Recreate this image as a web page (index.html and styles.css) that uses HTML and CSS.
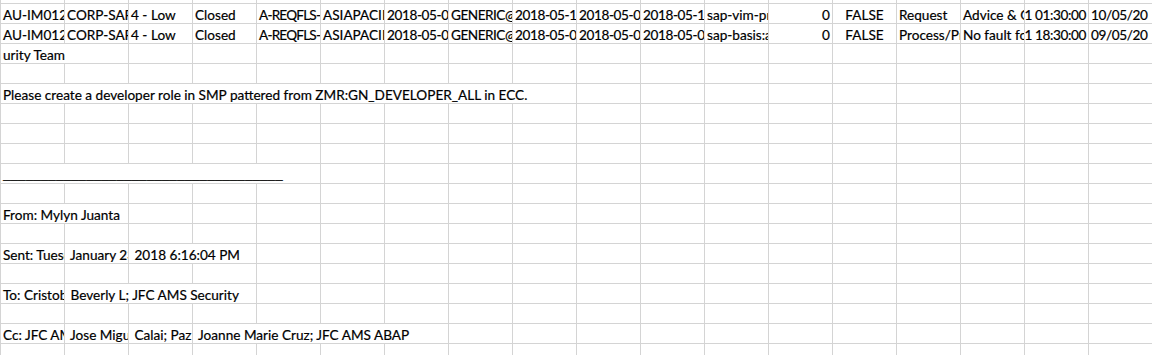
FILE: index.html
```html
<!DOCTYPE html>
<html lang="en">
<head>
<meta charset="utf-8">
<title>Sheet</title>
<link rel="stylesheet" href="styles.css">
</head>
<body>
<div class="sheet">
  <div class="row">
    <div class="c"></div><div class="c"></div><div class="c"></div><div class="c"></div><div class="c"></div><div class="c"></div><div class="c"></div><div class="c"></div><div class="c"></div><div class="c"></div><div class="c"></div><div class="c"></div><div class="c"></div><div class="c"></div><div class="c"></div><div class="c"></div><div class="c"></div><div class="c"></div>
  </div>
  <div class="row">
    <div class="c">AU-IM0121394</div><div class="c">CORP-SAP-VIM</div><div class="c">4 - Low</div><div class="c">Closed</div><div class="c tt">A-REQFLS-SAP</div><div class="c">ASIAPACIFIC</div><div class="c n">2018-05-04 09:12:33</div><div class="c t">GENERIC@jfc.com</div><div class="c n">2018-05-10 11:02:00</div><div class="c n">2018-05-07 10:00:00</div><div class="c n">2018-05-10 11:02:00</div><div class="c">sap-vim-pmo</div><div class="c r">0</div><div class="c m">FALSE</div><div class="c">Request</div><div class="c">Advice &amp; Guidance</div><div class="c r n"><span>2018-05-11 01:30:00</span></div><div class="c n">10/05/20</div>
  </div>
  <div class="row">
    <div class="c">AU-IM0121407</div><div class="c">CORP-SAP-BASIS</div><div class="c">4 - Low</div><div class="c">Closed</div><div class="c tt">A-REQFLS-SAP</div><div class="c">ASIAPACIFIC</div><div class="c n">2018-05-04 09:40:12</div><div class="c t">GENERIC@jfc.com</div><div class="c n">2018-05-09 17:21:00</div><div class="c n">2018-05-06 09:00:00</div><div class="c n">2018-05-09 17:21:00</div><div class="c">sap-basis:ams</div><div class="c r">0</div><div class="c m">FALSE</div><div class="c">Process/Procedure</div><div class="c">No fault found</div><div class="c r n"><span>2018-05-11 18:30:00</span></div><div class="c n">09/05/20</div>
  </div>
  <div class="row">
    <div class="c s2">urity Team</div><div class="c"></div><div class="c"></div><div class="c"></div><div class="c"></div><div class="c"></div><div class="c"></div><div class="c"></div><div class="c"></div><div class="c"></div><div class="c"></div><div class="c"></div><div class="c"></div><div class="c"></div><div class="c"></div><div class="c"></div><div class="c"></div>
  </div>
  <div class="row">
    <div class="c"></div><div class="c"></div><div class="c"></div><div class="c"></div><div class="c"></div><div class="c"></div><div class="c"></div><div class="c"></div><div class="c"></div><div class="c"></div><div class="c"></div><div class="c"></div><div class="c"></div><div class="c"></div><div class="c"></div><div class="c"></div><div class="c"></div><div class="c"></div>
  </div>
  <div class="row">
    <div class="c s9">Please create a developer role in SMP pattered from ZMR:GN_DEVELOPER_ALL in ECC.</div><div class="c"></div><div class="c"></div><div class="c"></div><div class="c"></div><div class="c"></div><div class="c"></div><div class="c"></div><div class="c"></div><div class="c"></div>
  </div>
  <div class="row">
    <div class="c"></div><div class="c"></div><div class="c"></div><div class="c"></div><div class="c"></div><div class="c"></div><div class="c"></div><div class="c"></div><div class="c"></div><div class="c"></div><div class="c"></div><div class="c"></div><div class="c"></div><div class="c"></div><div class="c"></div><div class="c"></div><div class="c"></div><div class="c"></div>
  </div>
  <div class="row">
    <div class="c"></div><div class="c"></div><div class="c"></div><div class="c"></div><div class="c"></div><div class="c"></div><div class="c"></div><div class="c"></div><div class="c"></div><div class="c"></div><div class="c"></div><div class="c"></div><div class="c"></div><div class="c"></div><div class="c"></div><div class="c"></div><div class="c"></div><div class="c"></div>
  </div>
  <div class="row">
    <div class="c"></div><div class="c"></div><div class="c"></div><div class="c"></div><div class="c"></div><div class="c"></div><div class="c"></div><div class="c"></div><div class="c"></div><div class="c"></div><div class="c"></div><div class="c"></div><div class="c"></div><div class="c"></div><div class="c"></div><div class="c"></div><div class="c"></div><div class="c"></div>
  </div>
  <div class="row">
    <div class="c s5 rule">_____________________________________</div><div class="c"></div><div class="c"></div><div class="c"></div><div class="c"></div><div class="c"></div><div class="c"></div><div class="c"></div><div class="c"></div><div class="c"></div><div class="c"></div><div class="c"></div><div class="c"></div><div class="c"></div>
  </div>
  <div class="row">
    <div class="c"></div><div class="c"></div><div class="c"></div><div class="c"></div><div class="c"></div><div class="c"></div><div class="c"></div><div class="c"></div><div class="c"></div><div class="c"></div><div class="c"></div><div class="c"></div><div class="c"></div><div class="c"></div><div class="c"></div><div class="c"></div><div class="c"></div><div class="c"></div>
  </div>
  <div class="row">
    <div class="c s2">From: Mylyn Juanta</div><div class="c"></div><div class="c"></div><div class="c"></div><div class="c"></div><div class="c"></div><div class="c"></div><div class="c"></div><div class="c"></div><div class="c"></div><div class="c"></div><div class="c"></div><div class="c"></div><div class="c"></div><div class="c"></div><div class="c"></div><div class="c"></div>
  </div>
  <div class="row">
    <div class="c"></div><div class="c"></div><div class="c"></div><div class="c"></div><div class="c"></div><div class="c"></div><div class="c"></div><div class="c"></div><div class="c"></div><div class="c"></div><div class="c"></div><div class="c"></div><div class="c"></div><div class="c"></div><div class="c"></div><div class="c"></div><div class="c"></div><div class="c"></div>
  </div>
  <div class="row">
    <div class="c">Sent: Tuesday</div><div class="c">&nbsp;January 23</div><div class="c s2">&nbsp;2018 6:16:04 PM</div><div class="c"></div><div class="c"></div><div class="c"></div><div class="c"></div><div class="c"></div><div class="c"></div><div class="c"></div><div class="c"></div><div class="c"></div><div class="c"></div><div class="c"></div><div class="c"></div><div class="c"></div><div class="c"></div>
  </div>
  <div class="row">
    <div class="c"></div><div class="c"></div><div class="c"></div><div class="c"></div><div class="c"></div><div class="c"></div><div class="c"></div><div class="c"></div><div class="c"></div><div class="c"></div><div class="c"></div><div class="c"></div><div class="c"></div><div class="c"></div><div class="c"></div><div class="c"></div><div class="c"></div><div class="c"></div>
  </div>
  <div class="row">
    <div class="c">To: Cristobal</div><div class="c s3">&nbsp;Beverly L; JFC AMS Security</div><div class="c"></div><div class="c"></div><div class="c"></div><div class="c"></div><div class="c"></div><div class="c"></div><div class="c"></div><div class="c"></div><div class="c"></div><div class="c"></div><div class="c"></div><div class="c"></div><div class="c"></div><div class="c"></div>
  </div>
  <div class="row">
    <div class="c"></div><div class="c"></div><div class="c"></div><div class="c"></div><div class="c"></div><div class="c"></div><div class="c"></div><div class="c"></div><div class="c"></div><div class="c"></div><div class="c"></div><div class="c"></div><div class="c"></div><div class="c"></div><div class="c"></div><div class="c"></div><div class="c"></div><div class="c"></div>
  </div>
  <div class="row">
    <div class="c">Cc: JFC AMS BASIS; Sison</div><div class="c">&nbsp;Jose Miguel</div><div class="c">&nbsp;Calai; Paz</div><div class="c s4">&nbsp;Joanne Marie Cruz; JFC AMS ABAP</div><div class="c"></div><div class="c"></div><div class="c"></div><div class="c"></div><div class="c"></div><div class="c"></div><div class="c"></div><div class="c"></div><div class="c"></div><div class="c"></div><div class="c"></div>
  </div>
  <div class="row">
    <div class="c"></div><div class="c"></div><div class="c"></div><div class="c"></div><div class="c"></div><div class="c"></div><div class="c"></div><div class="c"></div><div class="c"></div><div class="c"></div><div class="c"></div><div class="c"></div><div class="c"></div><div class="c"></div><div class="c"></div><div class="c"></div><div class="c"></div><div class="c"></div>
  </div>
</div>
</body>
</html>
```
FILE: styles.css
```css
html, body {
  margin: 0;
  padding: 0;
  background: #ffffff;
  overflow: hidden;
}

.sheet {
  margin-top: -17px;
  width: 1152px;
  font-family: "Lato", "Liberation Sans", sans-serif;
  font-size: 13.6px;
  color: #000000;
  -webkit-text-stroke: 0.2px #000000;
}

.row {
  display: grid;
  grid-template-columns: repeat(18, 64px);
  height: 20px;
}

.c {
  box-sizing: border-box;
  height: 20px;
  border-left: 1px solid #d4d4d4;
  border-top: 1px solid #d4d4d4;
  padding: 4px 2px 0 2px;
  line-height: 14px;
  white-space: nowrap;
  overflow: hidden;
}

.n {
  letter-spacing: -0.4px;
}

.t {
  letter-spacing: -0.5px;
}

.tt {
  letter-spacing: -0.8px;
}

.r {
  display: flex;
  justify-content: flex-end;
  padding-right: 2px;
}

.r span {
  flex-shrink: 0;
}

.m {
  text-align: center;
}

.s2 { grid-column: span 2; }
.s3 { grid-column: span 3; }
.s4 { grid-column: span 4; }
.s5 { grid-column: span 5; }
.s9 { grid-column: span 9; }

.rule {
  font-family: "Liberation Sans", sans-serif;
  padding-top: 3px;
  -webkit-text-stroke: 0;
}
```
